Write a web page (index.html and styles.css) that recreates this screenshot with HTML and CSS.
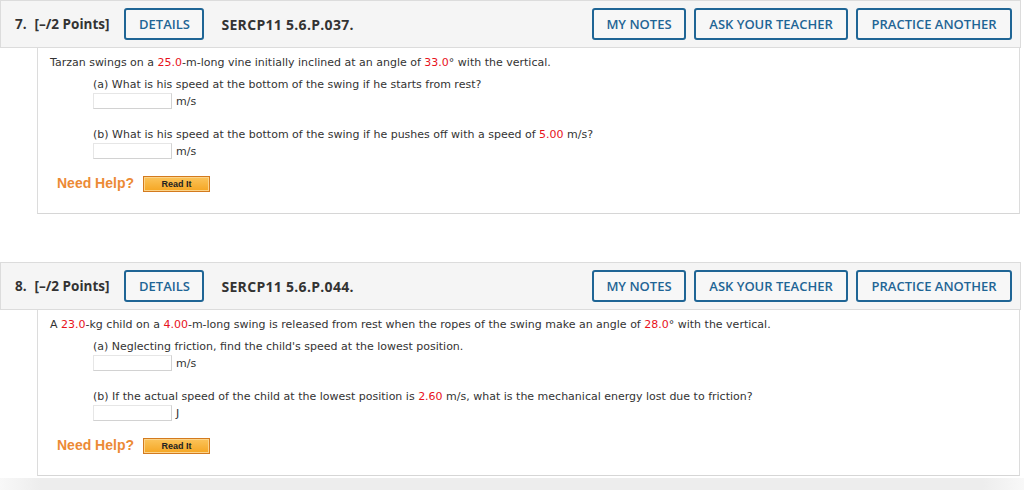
FILE: index.html
```html
<!DOCTYPE html>
<html>
<head>
<meta charset="utf-8">
<link rel="stylesheet" href="styles.css">
</head>
<body>
<div class="question">
  <div class="q-header">
    <span class="q-num">7.</span>
    <span class="q-points">[–/2 Points]</span>
    <button class="btn btn-details">DETAILS</button>
    <span class="q-code">SERCP11 5.6.P.037.</span>
    <div class="q-actions">
      <button class="btn btn-notes">MY NOTES</button>
      <button class="btn btn-ask">ASK YOUR TEACHER</button>
      <button class="btn btn-practice">PRACTICE ANOTHER</button>
    </div>
  </div>
  <div class="q-body">
    <p class="stem">Tarzan swings on a <span class="red">25.0</span>-m-long vine initially inclined at an angle of <span class="red">33.0</span>° with the vertical.</p>
    <div class="part">
      <p class="part-q">(a) What is his speed at the bottom of the swing if he starts from rest?</p>
      <div class="answer"><span class="input"></span><span class="unit">m/s</span></div>
    </div>
    <div class="part">
      <p class="part-q">(b) What is his speed at the bottom of the swing if he pushes off with a speed of <span class="red">5.00</span> m/s?</p>
      <div class="answer"><span class="input"></span><span class="unit">m/s</span></div>
    </div>
    <div class="help">
      <span class="help-label">Need Help?</span>
      <span class="read-it">Read It</span>
    </div>
  </div>
</div>

<div class="question">
  <div class="q-header">
    <span class="q-num">8.</span>
    <span class="q-points">[–/2 Points]</span>
    <button class="btn btn-details">DETAILS</button>
    <span class="q-code">SERCP11 5.6.P.044.</span>
    <div class="q-actions">
      <button class="btn btn-notes">MY NOTES</button>
      <button class="btn btn-ask">ASK YOUR TEACHER</button>
      <button class="btn btn-practice">PRACTICE ANOTHER</button>
    </div>
  </div>
  <div class="q-body">
    <p class="stem">A <span class="red">23.0</span>-kg child on a <span class="red">4.00</span>-m-long swing is released from rest when the ropes of the swing make an angle of <span class="red">28.0</span>° with the vertical.</p>
    <div class="part">
      <p class="part-q">(a) Neglecting friction, find the child's speed at the lowest position.</p>
      <div class="answer"><span class="input"></span><span class="unit">m/s</span></div>
    </div>
    <div class="part">
      <p class="part-q">(b) If the actual speed of the child at the lowest position is <span class="red">2.60</span> m/s, what is the mechanical energy lost due to friction?</p>
      <div class="answer"><span class="input"></span><span class="unit">J</span></div>
    </div>
    <div class="help">
      <span class="help-label">Need Help?</span>
      <span class="read-it">Read It</span>
    </div>
  </div>
</div>
<div class="page-foot"></div>
</body>
</html>
```
FILE: styles.css
```css
* { box-sizing: border-box; }
html, body { margin: 0; padding: 0; background: #fff; }
body {
  width: 1024px;
  height: 490px;
  overflow: hidden;
  font-family: "DejaVu Sans", Verdana, sans-serif;
  color: #333;
}
.question {
  width: 1021px;
  margin-bottom: 48px;
}
.question + .question { margin-bottom: 0; }
.q-header {
  display: flex;
  align-items: center;
  height: 48px;
  padding: 0 8px 0 14px;
  background: #f5f5f5;
  border: 1px solid #dcdcdc;
  font-family: "Open Sans", sans-serif;
  font-weight: 700;
  font-size: 13.5px;
  color: #333;
}
.q-num { margin-right: 8px; }
.q-points { margin-right: 15px; }
.q-code { margin-left: 17px; font-size: 14px; letter-spacing: 0.3px; }
.btn {
  height: 32px;
  border: 2px solid #1f6595;
  border-radius: 3px;
  background: #f7f7f7;
  color: #1f6595;
  font-family: "Open Sans", sans-serif;
  font-weight: 600;
  font-size: 13px;
  padding: 0;
  cursor: pointer;
}
.btn-details { width: 80px; }
.q-actions {
  margin-left: auto;
  display: flex;
  gap: 8px;
}
.btn-notes { width: 94px; }
.btn-ask { width: 154px; }
.btn-practice { width: 156px; }
.q-body {
  margin-left: 37px;
  margin-right: 1px;
  border-left: 1px solid #dcdcdc;
  border-right: 1px solid #dcdcdc;
  border-bottom: 1px solid #d6d6d6;
  padding: 8px 0 21px 12px;
  font-size: 11px;
  line-height: 14px;
}
.stem { margin: 0 0 8px 0; }
.part { margin-left: 43px; margin-bottom: 19px; }
.part + .part { margin-bottom: 17px; }
.part-q { margin: 0 0 1px 0; }
.answer { display: flex; align-items: center; height: 16px; }
.input {
  display: inline-block;
  width: 79px;
  height: 16px;
  border: 1px solid #e6e6e6;
  border-right-color: #d2d2d2;
  border-bottom-color: #d2d2d2;
  background: #fff;
  margin-right: 4px;
}
.unit { position: relative; top: 1px; }
.red { color: #e8121b; }
.help {
  display: flex;
  align-items: center;
  height: 16px;
  margin-left: 7px;
}
.help-label {
  font-family: "Liberation Sans", Arial, sans-serif;
  font-weight: 700;
  font-size: 14px;
  line-height: 16px;
  color: #ec8a35;
  margin-right: 9px;
  position: relative;
  top: -1px;
}
.read-it {
  display: inline-flex;
  align-items: center;
  justify-content: center;
  width: 67px;
  height: 16px;
  background: linear-gradient(#fbc45b, #f5a623);
  border: 1px solid #d37a1e;
  box-shadow: inset 0 0 0 1px #fcd489;
  font-family: "Liberation Sans", Arial, sans-serif;
  font-weight: 700;
  font-size: 9px;
  color: #222;
}
.page-foot {
  margin-top: 2px;
  height: 12px;
  background: linear-gradient(to right, #f8f8f8 0%, #ededed 4%, #ededed 96%, #f8f8f8 100%);
}
```
